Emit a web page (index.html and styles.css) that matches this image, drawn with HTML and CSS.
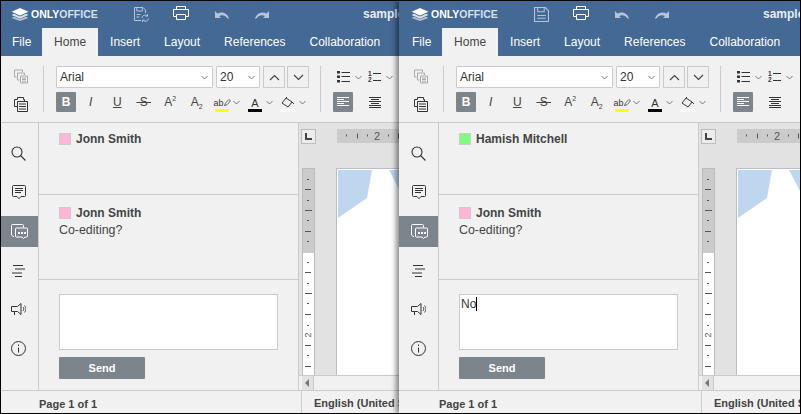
FILE: index.html
```html
<!DOCTYPE html>
<html lang="en">
<head>
<meta charset="utf-8">
<title>ONLYOFFICE co-editing chat</title>
<link rel="stylesheet" href="styles.css">
</head>
<body>
<svg class="defs" width="0" height="0" aria-hidden="true">
  <symbol id="i-logo" viewBox="0 0 18 13"><path d="M9 0l8.500 3.800L9 7.600.5 3.800z" fill="#fff"/><path d="M3 5.800L.5 6.900 9 10.700l8.500-3.800L15 5.800 9 8.500z" fill="#fff" opacity=".8"/><path d="M3 8.800L.5 9.900 9 13l8.500-3.100L15 8.800 9 11.300z" fill="#fff" opacity=".6"/></symbol>
  <symbol id="i-save" viewBox="0 0 14 14"><path d="M.5.5h10l3 3v10H.5zM3.500.5v4h6v-4M3 8h8M3 10.500h8" fill="none" stroke="currentColor"/></symbol>
  <symbol id="i-savesync" viewBox="0 0 15 15"><path d="M7 13.500H.5V.5h8.500l2.500 2.500v3M2.800.5v3.500h5.500V.5M2.500 7.500h4M2.500 10h3" fill="none" stroke="currentColor"/><path d="M8 11a3 3 0 0 1 5-2.200M14.500 11.500a3 3 0 0 1-5 2M13.500 7v2.200h-2M8.500 15v-2h2" fill="none" stroke="currentColor"/></symbol>
  <symbol id="i-print" viewBox="0 0 16 14"><path d="M3.500 3.500v-3h9v3M3.500 10.500H.5v-7h15v7h-3M3.500 8.500h9v5h-9z" fill="none" stroke="currentColor"/></symbol>
  <symbol id="i-undo" viewBox="0 0 14 9"><path d="M0 1v7h6L4 6c3-1.500 6-1 8 2l2 1C13 3.500 7.500 1 2.500 3.500z" fill="currentColor"/></symbol>
  <symbol id="i-redo" viewBox="0 0 14 9"><path d="M14 1v7H8l2-2C7 4.500 4 5 2 8L0 9C1 3.500 6.500 1 11.500 3.500z" fill="currentColor"/></symbol>
  <symbol id="i-copy" viewBox="0 0 14 14"><path d="M.5.5h8v2M.5.500v7h2M3.500 3.500h7v2M3.500 3.500v7h2M6.500 6.500h7v7h-7zM8 8.500h4M8 10h4M8 11.800h4" fill="none" stroke="currentColor"/></symbol>
  <symbol id="i-paste" viewBox="0 0 14 15"><path d="M3.500 9.500H.5v-7h3M9.500 2.500h1v2M3.500 4.500h10v10h-10zM3.500 2.500v-2h6v2M5 7h7M5 9.500h7M5 12h7" fill="none" stroke="currentColor"/></symbol>
  <symbol id="i-up" viewBox="0 0 11 7"><path d="M1 6l4.500-4.500L10 6" fill="none" stroke="currentColor" stroke-width="1.200"/></symbol>
  <symbol id="i-down" viewBox="0 0 11 7"><path d="M1 1l4.500 4.500L10 1" fill="none" stroke="currentColor" stroke-width="1.200"/></symbol>
  <symbol id="i-caret" viewBox="0 0 7 5"><path d="M.5 1L3.500 4l3-3" fill="none" stroke="currentColor"/></symbol>
  <symbol id="i-bullets" viewBox="0 0 13 12"><path d="M0 0h3v2.500H0zM0 4.500h3V7H0zM0 9h3v2.500H0z" fill="#333"/><path d="M4.500 1.500H13M4.500 5.500H13M4.500 10.500H13" stroke="#333"/></symbol>
  <symbol id="i-alignl" viewBox="0 0 12 10"><path d="M0 .5h12M0 2.500h7M0 4.500h12M0 6.500h7M0 8.500h12" stroke="currentColor"/></symbol>
  <symbol id="i-alignc" viewBox="0 0 12 11"><path d="M0 .5h12M2 2.500h8M0 4.500h12M2 6.500h8M0 8.500h12M0 10.500h12" stroke="currentColor"/></symbol>
  <symbol id="i-search" viewBox="0 0 15 15"><circle cx="6" cy="6" r="5" fill="none" stroke="currentColor" stroke-width="1.100"/><path d="M9.500 9.500l5 5" stroke="currentColor" stroke-width="1.100"/></symbol>
  <symbol id="i-comment" viewBox="0 0 14 15"><path d="M1.500.5h11a1 1 0 0 1 1 1v9a1 1 0 0 1-1 1H9l-2 2.200L5 11.500H1.500a1 1 0 0 1-1-1v-9a1 1 0 0 1 1-1zM3 3.500h8M3 5.500h8M3 7.500h6" fill="none" stroke="currentColor"/></symbol>
  <symbol id="i-chat" viewBox="0 0 18 15"><path d="M4 12.500H3L1.500 11V1.500a1 1 0 0 1 1-1h10a1 1 0 0 1 1 1v2" fill="none" stroke="#fff"/><path d="M6.500 4h10a1 1 0 0 1 1 1v7a1 1 0 0 1-1 1H15l-1.500 1.500L12 13H6.500a1 1 0 0 1-1-1V5a1 1 0 0 1 1-1z" fill="#7d858c" stroke="#fff"/><path d="M8 8h2v2H8zM11 8h2v2h-2zM14 8h2v2h-2z" fill="#fff"/></symbol>
  <symbol id="i-nav" viewBox="0 0 13 12"><path d="M1 .5h10M3 4h10M0 8h10M3 11.500h7" stroke="currentColor"/></symbol>
  <symbol id="i-speaker" viewBox="0 0 15 13"><path d="M.5 3.500h6L10 .5v11L6.500 8.500h-3V12M.5 3.500v5h3" fill="none" stroke="currentColor"/><path d="M12 4a3 3 0 0 1 0 4M13.500 2.500a5 5 0 0 1 0 7" fill="none" stroke="currentColor" stroke-width=".8"/></symbol>
  <symbol id="i-info" viewBox="0 0 15 15"><circle cx="7.500" cy="7.500" r="7" fill="none" stroke="currentColor"/><path d="M7.500 3.500v1.500M7.500 6.500V11.500" stroke="currentColor"/></symbol>
  <symbol id="i-pen" viewBox="0 0 8 9"><path d="M.5 7.500l1-2.500 4-4.500 2 1.500-4 4.500z" fill="none" stroke="currentColor" stroke-width=".9"/></symbol>
  <symbol id="i-fill" viewBox="0 0 14 11"><path d="M5 1l6 4-4 5-6-4zM5 1l1-1M11 5l2 2" fill="none" stroke="#333"/></symbol>
  <symbol id="i-tab" viewBox="0 0 7 7"><path d="M0 0h2v5h5v2H0z" fill="#444"/></symbol>
  <symbol id="i-hruler" viewBox="0 0 70 14"><path d="M9.500 5.500v2M20.500 4.500v5M30.500 5.500v2M51.500 5.500v2M61.500 4.500v5" stroke="#555"/><text x="40" y="11" class="rt">2</text></symbol>
  <symbol id="i-vruler" viewBox="0 0 13 207"><path d="M5 10.500h2M3 20.500h6M5 31.500h2M3 41.500h7M5 51.500h2M3 62.500h6M5 72.500h2M5 93.500h2M3 103.500h6M5 114.500h2M3 124.500h7M5 134.500h2M3 145.500h6M5 156.500h2M3 176.500h6M5 186.500h2M3 197.500h6" stroke="#555"/><text x="0" y="0" class="rt small" transform="translate(9,166) rotate(-90)">2</text></symbol>
  <symbol id="i-shapes" viewBox="0 0 64 49"><path d="M0 0h34l-5 28L0 48z" fill="#bed6ee"/><path d="M51 0h13v25z" fill="#bed6ee"/></symbol>
</svg>

<main class="stage">
  <section class="window">
    <header class="titlebar">
      <div class="logo"><svg class="logo-mark"><use href="#i-logo"/></svg><span class="logo-text"><b>ONLY</b><span>OFFICE</span></span></div>
      <svg class="tbi tbi-save dim"><use href="#i-savesync"/></svg>
      <svg class="tbi tbi-print"><use href="#i-print"/></svg>
      <svg class="tbi tbi-undo dim"><use href="#i-undo"/></svg>
      <svg class="tbi tbi-redo dim"><use href="#i-redo"/></svg>
      <span class="doc-title">sample.docx</span>
    </header>
    <nav class="tabs"><span class="tab">File</span><span class="tab active">Home</span><span class="tab">Insert</span><span class="tab">Layout</span><span class="tab">References</span><span class="tab">Collaboration</span></nav>
    <div class="toolbar">
      <div class="clip-col"><svg class="ci disabled"><use href="#i-copy"/></svg><svg class="ci"><use href="#i-paste"/></svg></div>
      <div class="sep"></div>
      <div class="font-col">
        <div class="row1">
          <div class="combo combo-font"><span>Arial</span><svg class="caret"><use href="#i-caret"/></svg></div>
          <div class="combo combo-size"><span>20</span><svg class="caret"><use href="#i-caret"/></svg></div>
          <div class="step"><svg class="stepi"><use href="#i-up"/></svg></div>
          <div class="step down"><svg class="stepi"><use href="#i-down"/></svg></div>
        </div>
        <div class="row2">
          <span class="fb bold">B</span>
          <span class="fi ital">I</span>
          <span class="fi"><u>U</u></span>
          <span class="fi"><s>&nbsp;S&nbsp;</s></span>
          <span class="fi">A<sup>2</sup></span>
          <span class="fi">A<sub>2</sub></span>
          <span class="split first"><span class="swatch-icon"><span class="abc">ab<svg class="pen"><use href="#i-pen"/></svg></span><i class="bar yellow"></i></span><svg class="caret"><use href="#i-caret"/></svg></span>
          <span class="split"><span class="swatch-icon"><span class="letter">A</span><i class="bar black"></i></span><svg class="caret"><use href="#i-caret"/></svg></span>
          <span class="split"><span class="swatch-icon"><svg class="fill"><use href="#i-fill"/></svg><i class="bar white"></i></span><svg class="caret"><use href="#i-caret"/></svg></span>
        </div>
      </div>
      <div class="sep sep2"></div>
      <div class="para-col">
        <div class="row1 lists">
          <svg class="li"><use href="#i-bullets"/></svg><svg class="caret"><use href="#i-caret"/></svg>
          <span class="numl"><span>1<br>2</span><i></i></span><svg class="caret"><use href="#i-caret"/></svg>
        </div>
        <div class="row2 aligns">
          <span class="fb"><svg class="al"><use href="#i-alignl"/></svg></span>
          <span class="fplain"><svg class="al tall"><use href="#i-alignc"/></svg></span>
        </div>
      </div>
    </div>
    <div class="main">
      <aside class="sidebar">
        <span class="sb"><svg class="s15"><use href="#i-search"/></svg></span>
        <span class="sb"><svg class="s14"><use href="#i-comment"/></svg></span>
        <span class="sb active"><svg class="s18"><use href="#i-chat"/></svg></span>
        <span class="sb"><svg class="s13"><use href="#i-nav"/></svg></span>
        <span class="sb"><svg class="s15 low"><use href="#i-speaker"/></svg></span>
        <span class="sb"><svg class="s15"><use href="#i-info"/></svg></span>
      </aside>
      <section class="panel">
        <div class="users"><div class="who"><i class="sq pink"></i><b>Jonn Smith</b></div></div>
        <div class="msgs"><div class="who"><i class="sq pink"></i><b>Jonn Smith</b></div><p>Co-editing?</p></div>
        <div class="compose"><div class="input"></div><button class="send">Send</button></div>
      </section>
      <section class="doc">
        <div class="doc-top"><span class="corner"><svg class="tabi"><use href="#i-tab"/></svg></span><span class="hruler"><svg class="hr"><use href="#i-hruler"/></svg></span></div>
        <div class="doc-mid"><div class="vruler"><i></i><svg class="vr"><use href="#i-vruler"/></svg></div><div class="page"><svg class="shapes"><use href="#i-shapes"/></svg></div></div>
        <div class="scroll"><span class="sbtn"></span><span class="strack"></span></div>
      </section>
    </div>
    <footer class="status"><span class="st-page">Page 1 of 1</span><span class="st-lang">English (United States)</span></footer>
  </section>

  <section class="window second">
    <header class="titlebar">
      <div class="logo"><svg class="logo-mark"><use href="#i-logo"/></svg><span class="logo-text"><b>ONLY</b><span>OFFICE</span></span></div>
      <svg class="tbi tbi-save dim"><use href="#i-save"/></svg>
      <svg class="tbi tbi-print"><use href="#i-print"/></svg>
      <svg class="tbi tbi-undo dim"><use href="#i-undo"/></svg>
      <svg class="tbi tbi-redo dim"><use href="#i-redo"/></svg>
      <span class="doc-title">sample.docx</span>
    </header>
    <nav class="tabs"><span class="tab">File</span><span class="tab active">Home</span><span class="tab">Insert</span><span class="tab">Layout</span><span class="tab">References</span><span class="tab">Collaboration</span></nav>
    <div class="toolbar">
      <div class="clip-col"><svg class="ci disabled"><use href="#i-copy"/></svg><svg class="ci"><use href="#i-paste"/></svg></div>
      <div class="sep"></div>
      <div class="font-col">
        <div class="row1">
          <div class="combo combo-font"><span>Arial</span><svg class="caret"><use href="#i-caret"/></svg></div>
          <div class="combo combo-size"><span>20</span><svg class="caret"><use href="#i-caret"/></svg></div>
          <div class="step"><svg class="stepi"><use href="#i-up"/></svg></div>
          <div class="step down"><svg class="stepi"><use href="#i-down"/></svg></div>
        </div>
        <div class="row2">
          <span class="fb bold">B</span>
          <span class="fi ital">I</span>
          <span class="fi"><u>U</u></span>
          <span class="fi"><s>&nbsp;S&nbsp;</s></span>
          <span class="fi">A<sup>2</sup></span>
          <span class="fi">A<sub>2</sub></span>
          <span class="split first"><span class="swatch-icon"><span class="abc">ab<svg class="pen"><use href="#i-pen"/></svg></span><i class="bar yellow"></i></span><svg class="caret"><use href="#i-caret"/></svg></span>
          <span class="split"><span class="swatch-icon"><span class="letter">A</span><i class="bar black"></i></span><svg class="caret"><use href="#i-caret"/></svg></span>
          <span class="split"><span class="swatch-icon"><svg class="fill"><use href="#i-fill"/></svg><i class="bar white"></i></span><svg class="caret"><use href="#i-caret"/></svg></span>
        </div>
      </div>
      <div class="sep sep2"></div>
      <div class="para-col">
        <div class="row1 lists">
          <svg class="li"><use href="#i-bullets"/></svg><svg class="caret"><use href="#i-caret"/></svg>
          <span class="numl"><span>1<br>2</span><i></i></span><svg class="caret"><use href="#i-caret"/></svg>
        </div>
        <div class="row2 aligns">
          <span class="fb"><svg class="al"><use href="#i-alignl"/></svg></span>
          <span class="fplain"><svg class="al tall"><use href="#i-alignc"/></svg></span>
        </div>
      </div>
    </div>
    <div class="main">
      <aside class="sidebar">
        <span class="sb"><svg class="s15"><use href="#i-search"/></svg></span>
        <span class="sb"><svg class="s14"><use href="#i-comment"/></svg></span>
        <span class="sb active"><svg class="s18"><use href="#i-chat"/></svg></span>
        <span class="sb"><svg class="s13"><use href="#i-nav"/></svg></span>
        <span class="sb"><svg class="s15 low"><use href="#i-speaker"/></svg></span>
        <span class="sb"><svg class="s15"><use href="#i-info"/></svg></span>
      </aside>
      <section class="panel">
        <div class="users"><div class="who"><i class="sq green"></i><b>Hamish Mitchell</b></div></div>
        <div class="msgs"><div class="who"><i class="sq pink"></i><b>Jonn Smith</b></div><p>Co-editing?</p></div>
        <div class="compose"><div class="input">No<span class="cursor"></span></div><button class="send">Send</button></div>
      </section>
      <section class="doc">
        <div class="doc-top"><span class="corner"><svg class="tabi"><use href="#i-tab"/></svg></span><span class="hruler"><svg class="hr"><use href="#i-hruler"/></svg></span></div>
        <div class="doc-mid"><div class="vruler"><i></i><svg class="vr"><use href="#i-vruler"/></svg></div><div class="page"><svg class="shapes"><use href="#i-shapes"/></svg></div></div>
        <div class="scroll"><span class="sbtn"></span><span class="strack"></span></div>
      </section>
    </div>
    <footer class="status"><span class="st-page">Page 1 of 1</span><span class="st-lang">English (United States)</span></footer>
  </section>
</main>
</body>
</html>
```

FILE: styles.css
```css
* { box-sizing: border-box; }
html, body { margin: 0; padding: 0; }
body { width: 801px; height: 414px; overflow: hidden; background: #000; font-family: "Liberation Sans", Arial, sans-serif; color: #444; }
.defs { position: absolute; }
.rt { font: 11px "Liberation Sans", Arial, sans-serif; fill: #555; text-anchor: middle; }
.small { font-size: 9px; }

.stage { position: relative; width: 801px; height: 414px; overflow: hidden; }
.stage::after { content: ""; position: absolute; inset: 0; border: 1px solid #000; pointer-events: none; z-index: 5; }

.window { position: absolute; top: 0; left: -1px; width: 460px; height: 414px; background: #f1f1f1; display: flex; flex-direction: column; overflow: hidden; }
.second { left: 399px; box-shadow: -3px 0 5px rgba(0,0,0,.45); overflow: visible; clip-path: inset(0 0 0 -12px); }

/* title bar */
.titlebar { height: 28px; flex: none; background: #446995; color: #fff; display: flex; align-items: center; position: relative; }
.logo { display: flex; align-items: center; margin-left: 12px; width: 123px; }
.logo-mark { width: 18px; height: 13px; }
.logo-text { margin-left: 2px; font-size: 10.500px; font-weight: 700; color: #d6e0ea; white-space: nowrap; }
.logo-text b { color: #fff; }
.tbi { flex: none; color: #fff; display: block; }
.dim { color: #b5c4d6; }
.tbi-save { width: 15px; height: 15px; }
.tbi-print { width: 16px; height: 14px; margin-left: 24px; margin-top: -2px; }
.tbi-undo { width: 14px; height: 9px; margin-left: 26px; }
.tbi-redo { width: 14px; height: 9px; margin-left: 26px; }
.doc-title { margin-left: 94px; font-size: 12px; font-weight: 700; color: #e8edf3; white-space: nowrap; }

/* tabs */
.tabs { height: 28px; flex: none; background: #446995; display: flex; padding-left: 1px; }
.tab { padding: 0 12px; font-size: 12px; line-height: 28px; color: #fff; white-space: nowrap; }
.tab:first-child { margin-right: -1.300px; }
.tab.active { background: #f1f1f1; color: #444; }

/* toolbar */
.toolbar { height: 67px; flex: none; display: flex; padding-top: 10px; border-bottom: 1px solid #cbcbcb; background: #f1f1f1; }
.clip-col { width: 44px; padding-left: 15px; display: flex; flex-direction: column; gap: 13px; padding-top: 3px; }
.ci { width: 14px; height: 15px; color: #333; display: block; }
.disabled { color: #aaa; }
.sep { width: 1px; height: 46px; background: #cbcbcb; flex: none; }
.font-col { margin-left: 12px; width: 265px; flex: none; }
.row1 { display: flex; height: 22px; gap: 3px; }
.row2 { display: flex; height: 20px; margin-top: 4px; align-items: center; }
.combo { height: 22px; background: #fff; border: 1px solid #cbcbcb; border-radius: 1px; display: flex; align-items: center; justify-content: space-between; padding: 0 4px 0 3px; font-size: 12px; color: #333; }
.combo-font { width: 157px; }
.combo-size { width: 44px; }
.caret { width: 7px; height: 5px; color: #777; flex: none; display: block; }
.step { width: 22px; height: 22px; border: 1px solid #cbcbcb; display: flex; align-items: center; justify-content: center; color: #444; }
.down { margin-left: -1px; }
.stepi { width: 11px; height: 7px; display: block; }
.fb { width: 20px; height: 20px; background: #7d858c; color: #fff; border-radius: 1px; display: flex; align-items: center; justify-content: center; flex: none; }
.bold { font-weight: 700; font-size: 12px; margin-right: 1.500px; }
.fi { width: 26.500px; text-align: center; font-size: 12px; color: #444; flex: none; white-space: nowrap; }
.ital { font-style: italic; }
.fi sup, .fi sub { font-size: 7px; line-height: 0; }
.split { width: 33px; display: flex; align-items: center; flex: none; gap: 4px; }
.first { margin-left: 5px; }
.swatch-icon { width: 14px; height: 20px; display: flex; flex-direction: column; align-items: center; justify-content: flex-end; flex: none; }
.bar { display: block; width: 14px; height: 3px; flex: none; }
.yellow { background: #ff0; }
.black { background: #000; }
.white { background: #fff; }
.abc { font-size: 9px; line-height: 10px; color: #333; display: flex; align-items: center; margin-bottom: 1px; }
.pen { width: 7px; height: 8px; color: #444; }
.letter { font-size: 11px; line-height: 12px; color: #333; }
.fill { width: 14px; height: 11px; margin-bottom: 1px; }
.font-col + .sep2 { margin-left: -1px; }
.para-col { margin-left: 12px; flex: none; width: 90px; }
.lists { align-items: center; gap: 0; }
.li { width: 13px; height: 12px; margin-left: 4px; }
.lists .caret { margin-left: 5px; }
.numl { margin-left: 6px; width: 13px; height: 13px; font-size: 6.500px; line-height: 6.500px; font-weight: 700; color: #333; display: flex; gap: 1px; }
.numl i { flex: 1; height: 8px; margin-top: 2px; border-top: 1px solid #333; border-bottom: 1px solid #333; }
.al { width: 12px; height: 10px; display: block; color: #fff; }
.tall { color: #333; height: 11px; }
.fplain { width: 20px; height: 20px; display: flex; align-items: center; justify-content: center; margin-left: 12px; }

/* main */
.main { flex: 1; min-height: 0; display: flex; }
.sidebar { width: 40px; flex: none; border-right: 1px solid #cbcbcb; padding-top: 15px; display: flex; flex-direction: column; gap: 8px; }
.sb { height: 31px; display: flex; align-items: center; justify-content: center; color: #333; flex: none; }
.sb.active { background: #7d858c; }
.s15 { width: 15px; height: 15px; }
.s14 { width: 14px; height: 15px; }
.s18 { width: 18px; height: 15px; }
.s13 { width: 13px; height: 12px; }
.low { height: 13px; }

.panel { width: 260px; flex: none; border-right: 1px solid #cbcbcb; display: flex; flex-direction: column; }
.users { height: 72px; flex: none; padding: 10px 20px 0; border-bottom: 1px solid #cbcbcb; }
.msgs { height: 85px; flex: none; padding: 12px 20px 0; border-bottom: 1px solid #cbcbcb; }
.msgs p { margin: 4px 0 0; font-size: 12.400px; line-height: 14px; color: #444; }
.who { display: flex; align-items: center; height: 12px; gap: 5px; }
.who b { font-size: 12px; line-height: 14px; color: #444; }
.sq { width: 12px; height: 12px; display: block; border: 1px solid #ccc; flex: none; }
.pink { background: #ffb6d5; }
.green { background: #7dff7d; }
.compose { padding: 14px 20px 0; }
.input { width: 219px; height: 56px; background: #fff; border: 1px solid #cbcbcb; padding: 2px 1px; font-size: 12px; line-height: 14px; color: #333; }
.cursor { display: inline-block; width: 1px; height: 14px; background: #000; vertical-align: top; }
.send { display: block; margin-top: 7px; width: 86px; height: 22px; border: 0; border-radius: 1px; background: #7d858c; color: #fff; font: 700 11px "Liberation Sans", Arial, sans-serif; padding: 0; }

.doc { flex: 1; min-width: 0; background: #e2e2e2; display: flex; flex-direction: column; padding-top: 6px; }
.doc-top { height: 15px; flex: none; display: flex; }
.corner { margin-left: 2px; width: 15px; height: 15px; border: 1px solid #bbb; background: #ececec; display: flex; align-items: center; justify-content: center; flex: none; }
.tabi { width: 7px; height: 7px; }
.hruler { margin-left: 21px; width: 70px; height: 14px; background: #cbcbcb; flex: none; }
.hr { width: 70px; height: 14px; display: block; }
.doc-mid { flex: 1; min-height: 0; margin-top: 24px; display: flex; }
.vruler { margin-left: 3px; width: 13px; flex: none; background: #fff; border: 1px solid #bbb; border-bottom: 0; position: relative; overflow: hidden; }
.vruler i { display: block; height: 84px; background: #cbcbcb; }
.vr { position: absolute; left: -1px; top: 0; width: 13px; height: 207px; }
.page { margin-left: 21px; width: 120px; background: #fff; border: 1px solid #b9bec7; border-width: 1px 0 0 1px; padding: 1px 0 0 1px; flex: none; }
.shapes { width: 64px; height: 49px; display: block; }
.scroll { height: 15px; flex: none; background: #f1f1f1; border-top: 1px solid #cbcbcb; display: flex; padding-left: 3px; }
.sbtn { width: 12px; height: 14px; background: #e2e2e2; border-right: 1px solid #cbcbcb; position: relative; }
.sbtn::before { content: ""; position: absolute; left: 3px; top: 3px; border: 4px solid transparent; border-left-width: 0; border-right: 4px solid #777; }
.strack { flex: 1; }

.status { height: 24px; flex: none; border-top: 1px solid #cbcbcb; display: flex; align-items: center; font-size: 11px; font-weight: 700; color: #444; background: #f1f1f1; }
.st-page { width: 303px; height: 100%; padding-left: 40px; border-right: 1px solid #cbcbcb; line-height: 26px; flex: none; }
.st-lang { padding-left: 12px; line-height: 26px; white-space: nowrap; }
```
